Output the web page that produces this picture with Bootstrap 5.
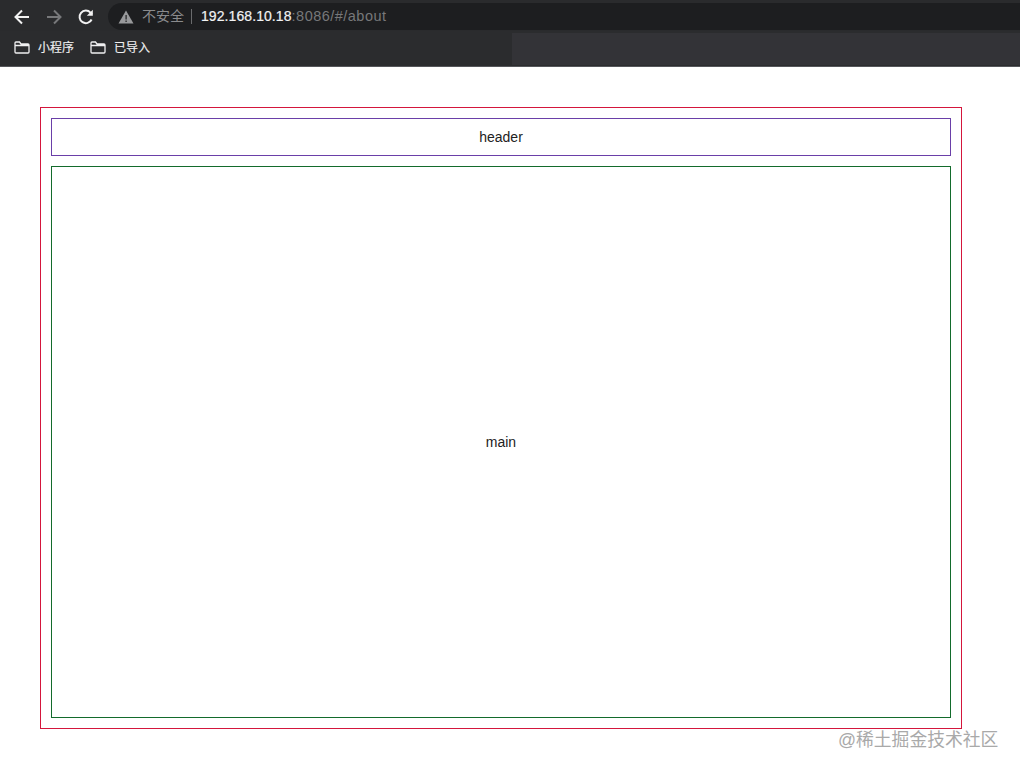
<!DOCTYPE html>
<html lang="zh">
<head>
<meta charset="utf-8">
<title>about</title>
<link href="https://cdn.jsdelivr.net/npm/bootstrap@5.3.0/dist/css/bootstrap.min.css" rel="stylesheet">
<style>
html,body{height:771px;overflow:hidden;background:#fff}
body{font-family:"Liberation Sans","Noto Sans CJK SC",sans-serif;position:relative}
.chrome-top{height:31px;background:#2a2b2d;padding-top:2px;padding-left:12px}
.chrome-top svg{flex:none}
.nav-ico{width:20px;height:20px}
.fwd-ico{margin:0 12px}
.addr{flex:1;height:27px;margin-left:12px;background:#1d1e20;border-radius:14px 0 0 14px;padding-left:10px;font-size:14px;white-space:nowrap}
.addr-warn{color:#8a8b8d;margin-left:8px;font-size:14px}
.addr-sep{width:1px;height:15px;background:#6a6b6d;margin:0 9px 0 7px}
.addr-host{color:#f1f2f3;font-size:14px;letter-spacing:.08px;-webkit-text-stroke:.2px #f1f2f3}
.addr-rest{color:#77787a;font-size:14.500px;letter-spacing:.48px}
.bookmarks{height:36px;background:#2b2c2e;border-bottom:1px solid #55565a;color:#f0f0f1;font-size:12px;padding-left:14px;padding-bottom:2px;gap:16px}
.bm-fill{position:absolute;left:512px;top:33px;width:508px;height:32px;background:#333337}
.bm-item{gap:8px;position:relative}
.bm-item span{-webkit-text-stroke:.15px #f0f0f1}
.page-zone{padding:40px 58px 0 40px}
.outer-frame{height:622px;border:1px solid #d4163c;padding:10px;gap:10px}
.head-frame{height:38px;border:1px solid #6a3fa8;font-size:14px;color:#222}
.main-frame{flex:1;border:1px solid #136b2c;font-size:14px;color:#222}
.watermark{position:absolute;left:838px;top:729px;font-size:17.800px;line-height:22px;color:#a9a9a9;white-space:nowrap}
</style>
</head>
<body>
<div class="chrome-top d-flex align-items-center">
  <svg class="nav-ico" viewBox="0 0 20 20" fill="none" stroke="#f2f2f2" stroke-width="2"><path d="M17 10H4M10 3.500 3.500 10l6.500 6.500"/></svg>
  <svg class="nav-ico fwd-ico" viewBox="0 0 20 20" fill="none" stroke="#77787a" stroke-width="2"><path d="M3 10h13M10 3.500l6.500 6.500-6.500 6.500"/></svg>
  <svg class="nav-ico" viewBox="0 0 20 20" fill="none" stroke="#f2f2f2" stroke-width="2"><path d="M15.600 12.500A6.300 6.300 0 1 1 14.500 5.600L16 7.200"/><path d="M16.800 2.800v6h-6z" fill="#f2f2f2" stroke="none"/></svg>
  <div class="addr d-flex align-items-center">
    <svg width="16" height="14" viewBox="0 0 15 14"><path d="M7.500 .5 15 13.500H0z" fill="#98999b"/><path d="M7 5h1.200v4.500H7zM7 10.500h1.200v1.400H7z" fill="#1d1e20"/></svg>
    <span class="addr-warn">不安全</span><span class="addr-sep"></span>
    <span class="addr-host">192.168.10.18</span><span class="addr-rest">:8086/#/about</span>
  </div>
</div>
<div class="bookmarks d-flex align-items-center">
  <div class="bm-fill"></div>
  <div class="bm-item d-flex align-items-center">
    <svg width="16" height="13" viewBox="0 0 16 13" fill="none" stroke="#f0f0f1" stroke-width="1.300"><path d="M1 3V2q0-1 1-1h3.500l1.500 2h7q1 0 1 1v7q0 1-1 1H2q-1 0-1-1zM1 4.500h14"/></svg>
    <span>小程序</span>
  </div>
  <div class="bm-item d-flex align-items-center">
    <svg width="16" height="13" viewBox="0 0 16 13" fill="none" stroke="#f0f0f1" stroke-width="1.300"><path d="M1 3V2q0-1 1-1h3.500l1.500 2h7q1 0 1 1v7q0 1-1 1H2q-1 0-1-1zM1 4.500h14"/></svg>
    <span>已导入</span>
  </div>
</div>
<div class="page-zone">
  <div class="outer-frame d-flex flex-column">
    <div class="head-frame d-flex align-items-center justify-content-center">header</div>
    <div class="main-frame d-flex align-items-center justify-content-center">main</div>
  </div>
</div>
<div class="watermark">@稀土掘金技术社区</div>
</body>
</html>
